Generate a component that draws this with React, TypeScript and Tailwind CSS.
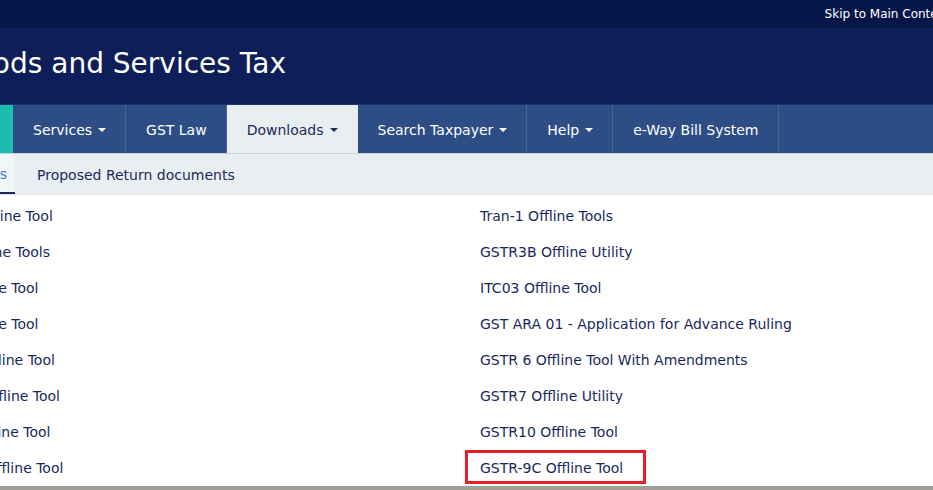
import React from "react";

const NAV = [
  { label: "Services", caret: true },
  { label: "GST Law", caret: false },
  { label: "Downloads", caret: true, active: true },
  { label: "Search Taxpayer", caret: true },
  { label: "Help", caret: true },
  { label: "e-Way Bill System", caret: false },
];

const LEFT_TOOLS = [
  "Returns Offline Tool",
  "Tran-2 Offline Tools",
  "ITC01 Offline Tool",
  "ITC04 Offline Tool",
  "GSTR11 Offline Tool",
  "GSTR-9A Offline Tool",
  "GSTR-4 Offline Tool",
  "Matching Offline Tool",
];

const RIGHT_TOOLS = [
  "Tran-1 Offline Tools",
  "GSTR3B Offline Utility",
  "ITC03 Offline Tool",
  "GST ARA 01 - Application for Advance Ruling",
  "GSTR 6 Offline Tool With Amendments",
  "GSTR7 Offline Utility",
  "GSTR10 Offline Tool",
  "GSTR-9C Offline Tool",
];

function Caret({ dark }: { dark?: boolean }) {
  return (
    <span
      className={`ml-[6px] inline-block w-0 h-0 border-l-[4px] border-r-[4px] border-t-[4px] border-l-transparent border-r-transparent ${
        dark ? "border-t-[#1b2a5e]" : "border-t-white"
      }`}
    />
  );
}

export default function App() {
  return (
    <div className="w-[933px] h-[490px] overflow-hidden bg-white font-['DejaVu_Sans',sans-serif] flex flex-col">
      {/* top strip */}
      <div className="h-[28px] bg-[#071648] flex items-center justify-end shrink-0">
        <span className="text-[12px] text-white whitespace-nowrap mr-[-17px]">Skip to Main Content</span>
      </div>

      {/* title */}
      <div className="h-[77px] bg-[#0d1e58] flex items-center shrink-0 border-b border-[#1d3570]">
        <h1 className="ml-[-46px] text-[28px] text-white whitespace-nowrap leading-none mt-[-4px]">
          Goods and Services Tax
        </h1>
      </div>

      {/* main nav */}
      <nav className="h-[49px] bg-[#2c4e84] flex shrink-0 border-b border-[#c9d1d9]">
        <div className="w-[13px] bg-[#1bbdb0]" />
        {NAV.map((item) => (
          <div
            key={item.label}
            className={`flex items-center pl-5 pr-[19px] pt-[2px] text-[14px] whitespace-nowrap border-r ${
              item.active
                ? "bg-[#e9eef1] text-[#1b2a5e] border-[#e9eef1]"
                : "text-white border-[#4a6390]"
            }`}
          >
            {item.label}
            {item.caret && <Caret dark={item.active} />}
          </div>
        ))}
      </nav>

      {/* sub nav */}
      <div className="h-[41px] bg-[#e9eef1] flex shrink-0 border-b border-[#dde3e7]">
        <div className="w-[15px] bg-[#f3f6f7] border-b-2 border-[#1b2a5e] flex items-center justify-end overflow-hidden pt-[2px]">
          <span className="text-[14px] text-[#3a7bd5] whitespace-nowrap mr-[8px]">s</span>
        </div>
        <div className="flex items-center pl-[22px] pt-[2px] text-[14px] text-[#1b2a5e] whitespace-nowrap">
          Proposed Return documents
        </div>
      </div>

      {/* offline tools list */}
      <div className="flex-1 flex ml-[-83px] pt-[3px] text-[14px] text-[#17295a]">
        <ul className="w-[563px] shrink-0">
          {LEFT_TOOLS.map((t) => (
            <li key={t} className="h-9 flex items-center whitespace-nowrap">
              {t}
            </li>
          ))}
        </ul>
        <ul className="flex-1">
          {RIGHT_TOOLS.map((t, i) => (
            <li key={t} className="relative h-9 flex items-center whitespace-nowrap">
              {t}
              {i === RIGHT_TOOLS.length - 1 && (
                <span className="absolute left-[-15px] top-0 w-[181px] h-[34px] border-[3px] border-[#e61e28]" />
              )}
            </li>
          ))}
        </ul>
      </div>

      {/* window edge */}
      <div className="h-[5px] bg-[#a19e97] shrink-0" />
    </div>
  );
}
